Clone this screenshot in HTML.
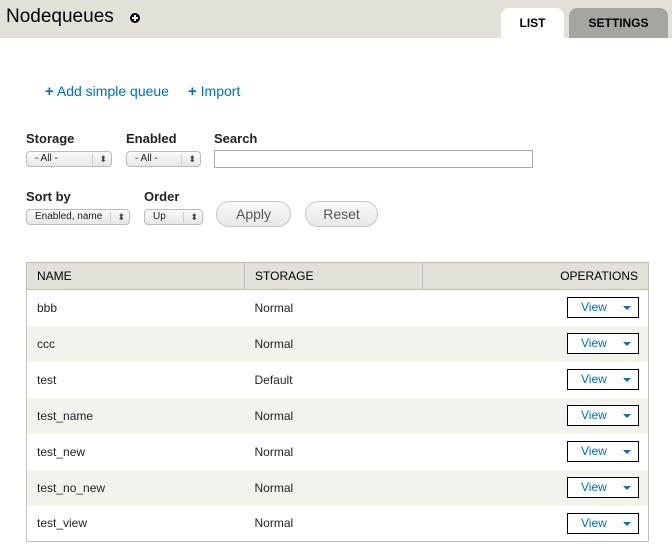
<!DOCTYPE html>
<html><head><style>
*{margin:0;padding:0;box-sizing:border-box}
body{width:672px;height:553px;background:#fff;font-family:"Liberation Sans",sans-serif;color:#222;position:relative;overflow:hidden}
.hdr{position:absolute;left:0;top:0;width:672px;height:38px;background:#e1e0d9}
.title{position:absolute;left:6px;top:6px;font-size:19px;color:#000}
.plus{position:absolute;left:130px;top:13px;width:10px;height:10px;border-radius:50%;background:#000}
.plus:before{content:"";position:absolute;left:2px;top:4px;width:6px;height:2px;background:#fff}
.plus:after{content:"";position:absolute;left:4px;top:2px;width:2px;height:6px;background:#fff}
.tab{position:absolute;top:8px;height:30px;border-radius:8px 8px 0 0;font-size:12px;font-weight:bold;text-align:center;line-height:31px;color:#000}
.a{position:absolute;color:#0071b3;font-size:14px;top:83px}
.a b{font-size:15px}
.lbl{position:absolute;font-size:13px;font-weight:bold;color:#222}
.sel{position:absolute;height:16px;border:1px solid #bbb;border-radius:4px;background:linear-gradient(#fbfbfb,#e6e6e6);font-size:10px;line-height:14px;padding-left:8px;color:#222}
.sel:after{content:"⬍";position:absolute;right:4px;top:0;font-size:9px;color:#444}
.sel i{position:absolute;right:18px;top:2px;bottom:2px;border-left:1px solid #ccc}
.btn{position:absolute;top:201px;height:26px;border:1px solid #c8c8c8;border-radius:13px;background:linear-gradient(#f8f8f8,#e8e8e8);font-size:14px;color:#555;text-align:center;line-height:24px}
table{position:absolute;left:26px;top:262px;width:623px;border-collapse:collapse;border:1px solid #bfbfba;font-size:12px}
th{background:#e1e0d9;height:27px;font-weight:normal;text-align:left;padding-left:10px;font-size:12px;color:#000;border-left:1px solid #bfbfba;border-bottom:1px solid #bfbfba}
td{height:36px;padding-left:10px;color:#222}
tr:nth-child(odd) td{background:#f3f3ee}
.v{display:inline-block;width:72px;height:21px;border:1px solid #000;background:#fff;color:#0071b3;font-size:12px;line-height:19px;padding-left:13px;position:relative;vertical-align:middle;text-align:left}
.v:after{content:"";position:absolute;right:7px;top:8px;border:4px solid transparent;border-top:4px solid #0071b3;border-bottom:0}
</style></head><body>
<div class="hdr"></div>
<div class="title">Nodequeues</div>
<div class="plus"></div>
<div class="tab" style="left:501px;width:63px;background:#fff">LIST</div>
<div class="tab" style="left:569px;width:99px;background:#a6a6a1">SETTINGS</div>
<div class="a" style="left:45px"><b>+</b> Add simple queue</div>
<div class="a" style="left:188px"><b>+</b> Import</div>
<div class="lbl" style="left:26px;top:131px">Storage</div>
<div class="lbl" style="left:126px;top:131px">Enabled</div>
<div class="lbl" style="left:214px;top:131px">Search</div>
<div class="sel" style="left:26px;top:151px;width:86px">- All -<i></i></div>
<div class="sel" style="left:126px;top:151px;width:75px">- All -<i></i></div>
<div style="position:absolute;left:214px;top:150px;width:319px;height:18px;border:1px solid #aaa"></div>
<div class="lbl" style="left:26px;top:189px">Sort by</div>
<div class="lbl" style="left:144px;top:189px">Order</div>
<div class="sel" style="left:26px;top:209px;width:104px;padding-left:8px">Enabled, name<i></i></div>
<div class="sel" style="left:144px;top:209px;width:59px">Up<i></i></div>
<div class="btn" style="left:216px;width:75px">Apply</div>
<div class="btn" style="left:305px;width:73px">Reset</div>
<table>
<tr><th style="width:218px;border-left:0">NAME</th><th style="width:178px">STORAGE</th><th style="text-align:right;padding-right:10px">OPERATIONS</th></tr>
<tr><td>bbb</td><td>Normal</td><td style="text-align:right;padding-right:9px"><span class="v">View</span></td></tr>
<tr><td>ccc</td><td>Normal</td><td style="text-align:right;padding-right:9px"><span class="v">View</span></td></tr>
<tr><td>test</td><td>Default</td><td style="text-align:right;padding-right:9px"><span class="v">View</span></td></tr>
<tr><td>test_name</td><td>Normal</td><td style="text-align:right;padding-right:9px"><span class="v">View</span></td></tr>
<tr><td>test_new</td><td>Normal</td><td style="text-align:right;padding-right:9px"><span class="v">View</span></td></tr>
<tr><td>test_no_new</td><td>Normal</td><td style="text-align:right;padding-right:9px"><span class="v">View</span></td></tr>
<tr><td>test_view</td><td>Normal</td><td style="text-align:right;padding-right:9px"><span class="v">View</span></td></tr>
</table>
</body></html>
